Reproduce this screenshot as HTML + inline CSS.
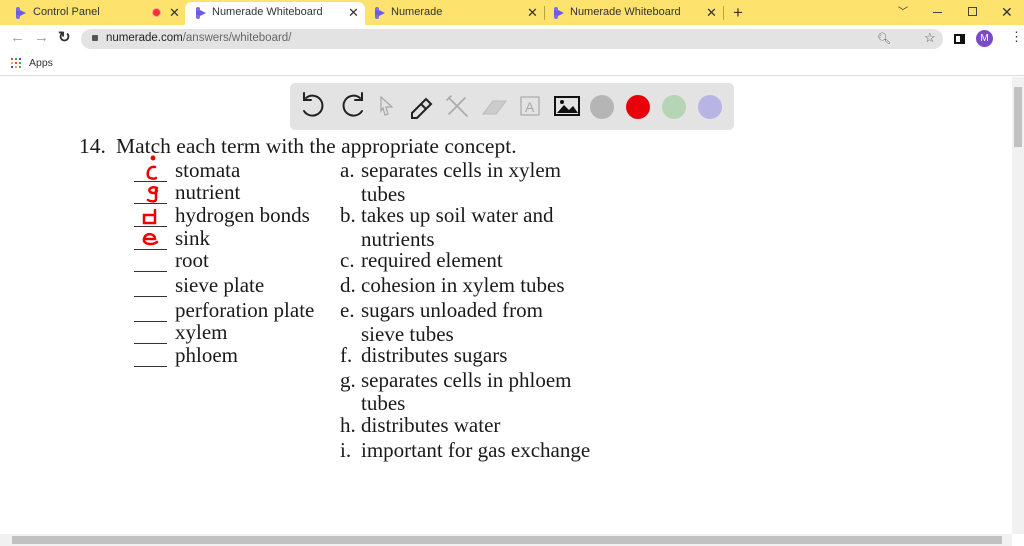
<!DOCTYPE html>
<html><head><style>
*{margin:0;padding:0;box-sizing:border-box}
body{width:1024px;height:546px;overflow:hidden;background:#fff;font-family:"Liberation Sans",sans-serif;position:relative}
.abs{position:absolute}
.tabbar{left:0;top:0;width:1024px;height:25px;background:#fde26d}
.tab{top:0;height:25px;font-size:11px;color:#333;line-height:25px}
.s{font-family:"Liberation Serif",serif;font-size:21px;color:#1a1a1a;white-space:nowrap;line-height:20px;margin-top:-1px}
.bl{position:absolute;width:33px;height:1px;background:#333}
</style></head><body>
<div class="abs tabbar"></div>
<div class="abs" style="left:185px;top:2px;width:180px;height:24px;background:#fff;border-radius:7px 7px 0 0"></div>
<svg class="abs" style="left:14px;top:6px" width="14" height="14"><path d="M2 2L12 7L2 12Z" fill="#6b5ce7"/><circle cx="4" cy="3" r="2" fill="#7b6cf0"/><circle cx="4" cy="11" r="2" fill="#7b6cf0"/></svg>
<div class="abs tab" style="left:33px">Control Panel</div>
<div class="abs" style="left:152px;top:8px;width:9px;height:9px;border-radius:50%;background:#e33;border:1px solid #f99"></div>
<div class="abs tab" style="left:169px;font-size:13px">✕</div>
<svg class="abs" style="left:194px;top:6px" width="14" height="14"><path d="M2 2L12 7L2 12Z" fill="#6b5ce7"/><circle cx="4" cy="3" r="2" fill="#7b6cf0"/><circle cx="4" cy="11" r="2" fill="#7b6cf0"/></svg>
<div class="abs tab" style="left:212px">Numerade Whiteboard</div>
<div class="abs tab" style="left:348px;font-size:13px">✕</div>
<svg class="abs" style="left:373px;top:6px" width="14" height="14"><path d="M2 2L12 7L2 12Z" fill="#6b5ce7"/><circle cx="4" cy="3" r="2" fill="#7b6cf0"/><circle cx="4" cy="11" r="2" fill="#7b6cf0"/></svg>
<div class="abs tab" style="left:391px">Numerade</div>
<div class="abs tab" style="left:527px;font-size:13px">✕</div>
<div class="abs" style="left:544px;top:6px;width:1px;height:14px;background:#b9a440"></div>
<svg class="abs" style="left:552px;top:6px" width="14" height="14"><path d="M2 2L12 7L2 12Z" fill="#6b5ce7"/><circle cx="4" cy="3" r="2" fill="#7b6cf0"/><circle cx="4" cy="11" r="2" fill="#7b6cf0"/></svg>
<div class="abs tab" style="left:570px">Numerade Whiteboard</div>
<div class="abs tab" style="left:706px;font-size:13px">✕</div>
<div class="abs" style="left:723px;top:6px;width:1px;height:14px;background:#b9a440"></div>
<div class="abs tab" style="left:733px;font-size:17px">+</div>
<div class="abs tab" style="left:898px;font-size:10px">﹀</div>
<div class="abs" style="left:933px;top:12px;width:9px;height:1px;background:#444"></div>
<div class="abs" style="left:968px;top:7px;width:9px;height:9px;border:1px solid #444"></div>
<div class="abs tab" style="left:1001px;font-size:14px">✕</div>
<div class="abs" style="left:0;top:25px;width:1024px;height:27px;background:#fff"></div>
<div class="abs" style="left:10px;top:29px;font-size:15px;color:#999">←</div>
<div class="abs" style="left:34px;top:29px;font-size:15px;color:#999">→</div>
<div class="abs" style="left:58px;top:28px;font-size:15px;color:#333;font-weight:bold">↻</div>
<div class="abs" style="left:81px;top:29px;height:20px;background:#e3e3e3;border-radius:10px;width:862px"></div>
<div class="abs" style="left:92px;top:35px;width:6px;height:6px;background:#555;border-radius:1px"></div>
<div class="abs" style="left:106px;top:32px;font-size:11.5px;color:#222">numerade.com<span style="color:#666">/answers/whiteboard/</span></div>
<div class="abs" style="left:877px;top:32px;font-size:11px;color:#666">🔍︎</div>
<div class="abs" style="left:924px;top:30px;font-size:13px;color:#555">☆</div>
<div class="abs" style="left:954px;top:34px;width:11px;height:10px;border:2px solid #111;border-right-width:5px"></div>
<div class="abs" style="left:976px;top:30px;width:17px;height:17px;border-radius:50%;background:#7a4ac8;color:#fff;font-size:10px;line-height:17px;text-align:center">M</div>
<div class="abs" style="left:1010px;top:29px;font-size:13px;color:#333">⋮</div>
<svg class="abs" style="left:11px;top:58px" width="10" height="10"><g><rect x="0" y="0" width="2" height="2" fill="#e44"/><rect x="4" y="0" width="2" height="2" fill="#4a4"/><rect x="8" y="0" width="2" height="2" fill="#44e"/><rect x="0" y="4" width="2" height="2" fill="#ea4"/><rect x="4" y="4" width="2" height="2" fill="#e44"/><rect x="8" y="4" width="2" height="2" fill="#4a4"/><rect x="0" y="8" width="2" height="2" fill="#44e"/><rect x="4" y="8" width="2" height="2" fill="#ea4"/><rect x="8" y="8" width="2" height="2" fill="#4a4"/></g></svg>
<div class="abs" style="left:29px;top:57px;font-size:10.5px;color:#333">Apps</div>
<div class="abs" style="left:0;top:75px;width:1024px;height:1px;background:#ddd"></div>
<div class="abs" style="left:1012px;top:77px;width:12px;height:457px;background:#f1f1f1"></div>
<div class="abs" style="left:1014px;top:87px;width:8px;height:60px;background:#c1c1c1"></div>
<div class="abs" style="left:0;top:534px;width:1012px;height:12px;background:#f1f1f1"></div>
<div class="abs" style="left:12px;top:536px;width:990px;height:8px;background:#c1c1c1"></div>
<div class="abs" style="left:290px;top:83px;width:444px;height:47px;background:#e3e3e3;border-radius:5px"></div>
<svg class="abs" style="left:290px;top:83px" width="444" height="47" fill="none" stroke-linecap="round">
<path d="M16 15 A10 10 0 1 1 14 28" stroke="#222" stroke-width="2"/><path d="M14 10V17H21" stroke="#222" stroke-width="2"/>
<path d="M70 15 A10 10 0 1 0 72 28" stroke="#222" stroke-width="2"/><path d="M72 10V17H65" stroke="#222" stroke-width="2"/>
<path d="M91 14L102 24H96L98 31L95 32L93 25L91 28Z" stroke="#aaa" stroke-width="1.3"/>
<path d="M122 30L136 16L141 21L127 35H122Z M131 21L136 26" stroke="#222" stroke-width="2"/>
<path d="M159 15L175 31M175 15L159 31M157 17l4-4M173 29l4 4" stroke="#aaa" stroke-width="1.6"/>
<path d="M193 31L203 18H216L206 31Z" fill="#ccc" stroke="#bbb"/>
<rect x="231" y="14" width="18" height="18" stroke="#aaa" stroke-width="1.2"/><text x="235" y="29" font-size="14" fill="#aaa" stroke="none" font-family="Liberation Sans">A</text>
<rect x="265" y="14" width="24" height="18" stroke="#111" stroke-width="2"/><path d="M267 30L274 22L279 27L283 23L288 30Z" fill="#111"/><circle cx="272" cy="19" r="2" fill="#111"/>
<circle cx="312" cy="24" r="12" fill="#b5b5b5" stroke="none"/>
<circle cx="348" cy="24" r="12" fill="#e8000b" stroke="none"/>
<circle cx="384" cy="24" r="12" fill="#b5d5b5" stroke="none"/>
<circle cx="420" cy="24" r="12" fill="#b8b5e5" stroke="none"/>
</svg>
<div class="abs s" style="left:79px;top:137px;font-size:21.5px">14.</div>
<div class="abs s" style="left:116px;top:137px;font-size:21.5px">Match each term with the appropriate concept.</div>
<div class="bl" style="left:134px;top:181px"></div>
<div class="bl" style="left:134px;top:203px"></div>
<div class="bl" style="left:134px;top:226px"></div>
<div class="bl" style="left:134px;top:249px"></div>
<div class="bl" style="left:134px;top:271px"></div>
<div class="bl" style="left:134px;top:296px"></div>
<div class="bl" style="left:134px;top:321px"></div>
<div class="bl" style="left:134px;top:343px"></div>
<div class="bl" style="left:134px;top:366px"></div>
<div class="abs s" style="left:175px;top:161px">stomata</div>
<div class="abs s" style="left:175px;top:183px">nutrient</div>
<div class="abs s" style="left:175px;top:206px">hydrogen bonds</div>
<div class="abs s" style="left:175px;top:229px">sink</div>
<div class="abs s" style="left:175px;top:251px">root</div>
<div class="abs s" style="left:175px;top:276px">sieve plate</div>
<div class="abs s" style="left:175px;top:301px">perforation plate</div>
<div class="abs s" style="left:175px;top:323px">xylem</div>
<div class="abs s" style="left:175px;top:346px">phloem</div>
<svg class="abs" style="left:135px;top:155px" width="35" height="95" fill="none" stroke="#e00" stroke-width="2.5" stroke-linecap="round">
<circle cx="18" cy="3" r="1.2" fill="#e00"/>
<path d="M20 12C14 11 12 17 13 21C14 24 20 24 21 23"/>
<path d="M22 33C15 30 11 37 18 38C23 38 22 35 21 34M21 35V44C21 47 16 47 13 45"/>
<path d="M20 55V68H9V60H19"/>
<path d="M9 84H20C20 78 10 77 9 84C8 90 18 90 22 87"/>
</svg>
<div class="abs s" style="left:340px;top:161px">a.</div><div class="abs s" style="left:361px;top:161px">separates cells in xylem</div>
<div class="abs s" style="left:361px;top:185px">tubes</div>
<div class="abs s" style="left:340px;top:206px">b.</div><div class="abs s" style="left:361px;top:206px">takes up soil water and</div>
<div class="abs s" style="left:361px;top:230px">nutrients</div>
<div class="abs s" style="left:340px;top:251px">c.</div><div class="abs s" style="left:361px;top:251px">required element</div>
<div class="abs s" style="left:340px;top:276px">d.</div><div class="abs s" style="left:361px;top:276px">cohesion in xylem tubes</div>
<div class="abs s" style="left:340px;top:301px">e.</div><div class="abs s" style="left:361px;top:301px">sugars unloaded from</div>
<div class="abs s" style="left:361px;top:325px">sieve tubes</div>
<div class="abs s" style="left:340px;top:346px">f.</div><div class="abs s" style="left:361px;top:346px">distributes sugars</div>
<div class="abs s" style="left:340px;top:371px">g.</div><div class="abs s" style="left:361px;top:371px">separates cells in phloem</div>
<div class="abs s" style="left:361px;top:394px">tubes</div>
<div class="abs s" style="left:340px;top:416px">h.</div><div class="abs s" style="left:361px;top:416px">distributes water</div>
<div class="abs s" style="left:340px;top:441px">i.</div><div class="abs s" style="left:361px;top:441px">important for gas exchange</div>
</body></html>
